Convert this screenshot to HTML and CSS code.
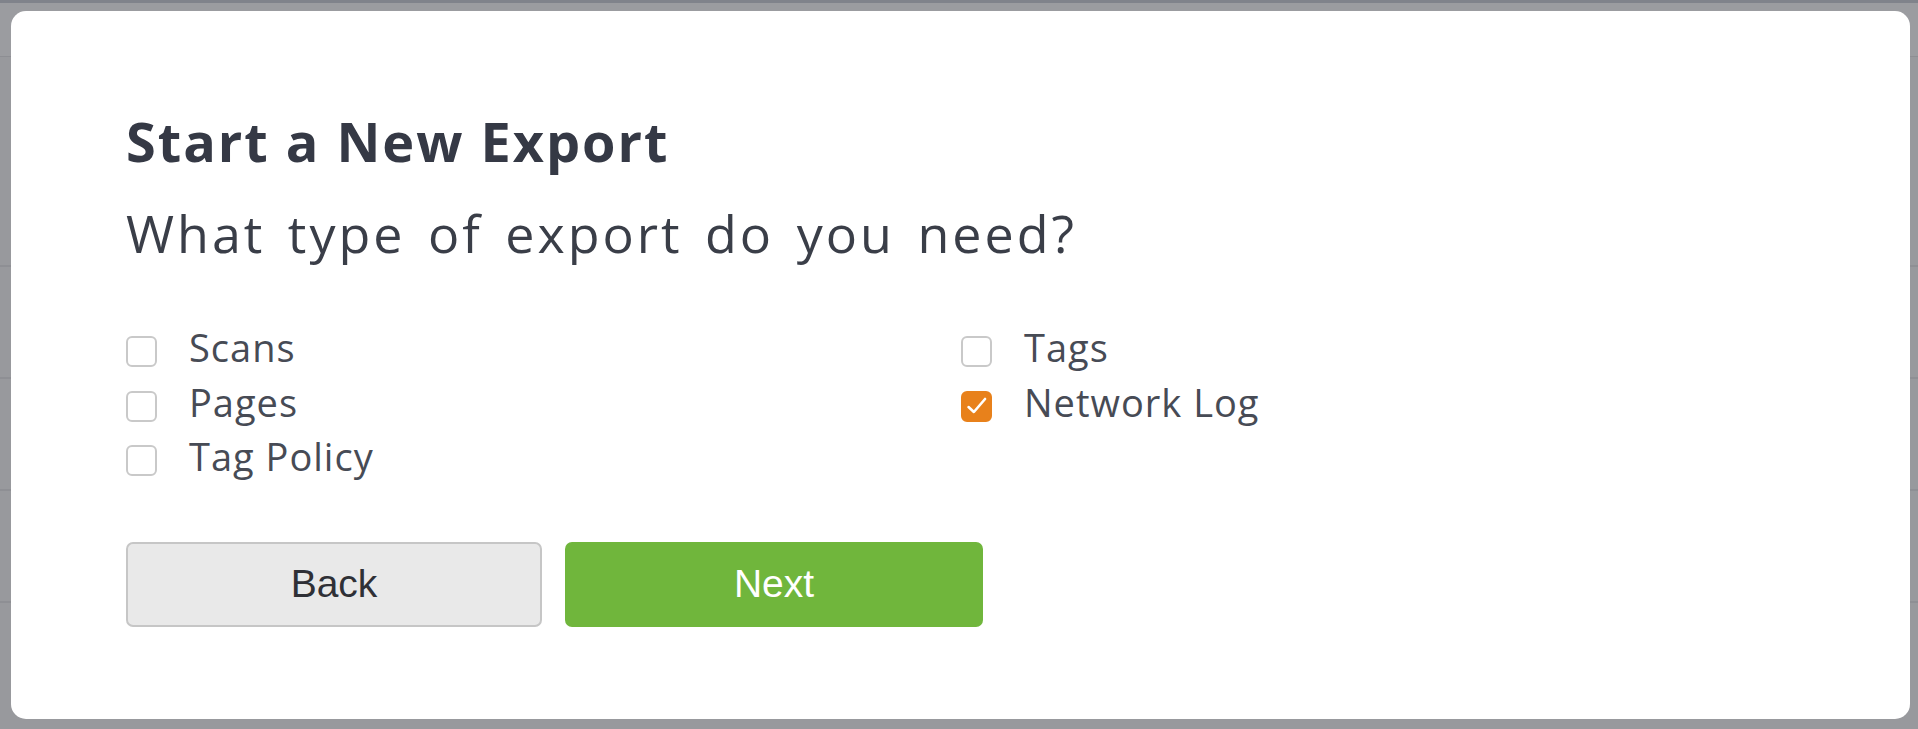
FILE: index.html
```html
<!DOCTYPE html>
<html lang="en">
<head>
  <meta charset="UTF-8">
  <title>Start a New Export</title>
  <link rel="stylesheet" href="styles.css">
</head>
<body>

  <!-- page behind the overlay -->
  <div class="backdrop">
    <div class="backdrop-top"></div>
    <div class="backdrop-row row-a"></div>
    <div class="backdrop-row"></div>
    <div class="backdrop-row"></div>
    <div class="backdrop-row"></div>
  </div>

  <!-- Export modal -->
  <div class="modal">
    <h1 class="modal-title">Start a New Export</h1>
    <h2 class="modal-question">What type of export do you need?</h2>

    <div class="options">
      <div class="option-col">
        <label class="option"><span class="box"></span>Scans</label>
        <label class="option"><span class="box"></span>Pages</label>
        <label class="option"><span class="box"></span>Tag Policy</label>
      </div>
      <div class="option-col">
        <label class="option"><span class="box"></span>Tags</label>
        <label class="option"><span class="box checked">
          <svg class="tick" viewBox="0 0 20 20"><path d="M3.5 10.8 L7.6 14.6 L16.2 4.6" fill="none" stroke="#fff" stroke-width="2" stroke-linecap="round" stroke-linejoin="round"/></svg>
        </span>Network Log</label>
      </div>
    </div>

    <div class="actions">
      <button class="btn btn-back">Back</button>
      <button class="btn btn-next">Next</button>
    </div>
  </div>

</body>
</html>
```

FILE: styles.css
```css
* {
  margin: 0;
  padding: 0;
  box-sizing: border-box;
}

body {
  width: 1918px;
  height: 729px;
  overflow: hidden;
  background: #98999d;
  font-family: 'Open Sans', sans-serif;
  position: relative;
}

/* page behind the overlay */
.backdrop {
  border-top: 3px solid #80838b;
}

.backdrop-top {
  height: 54px;
  background: #9b9ca0;
  border-bottom: 1px solid #8d8e93;
}

.backdrop-row {
  height: 112px;
  border-bottom: 2px solid #8e8f94;
}

.backdrop-row.row-a {
  height: 210px;
}

/* Modal */
.modal {
  position: absolute;
  top: 11px;
  left: 11px;
  right: 8px;
  bottom: 10px;
  background: #fff;
  border-radius: 15px;
  padding: 100px 115px 0;
}

.modal-title {
  font-size: 54px;
  line-height: 60px;
  font-weight: 700;
  color: #353945;
  letter-spacing: 2px;
}

.modal-question {
  margin-top: 32px;
  font-size: 52px;
  line-height: 60px;
  font-weight: 400;
  color: #3a3e48;
  letter-spacing: 3px;
  word-spacing: 6px;
}

.options {
  margin-top: 57px;
  display: grid;
  grid-template-columns: 835px 835px;
}

.option {
  display: flex;
  align-items: flex-start;
  height: 54.5px;
  font-size: 38px;
  line-height: 54.5px;
  color: #474b55;
  letter-spacing: 1px;
}

.box {
  width: 31px;
  height: 31px;
  margin-top: 16px;
  margin-right: 32px;
  border: 2px solid #c9c9c9;
  border-radius: 6px;
  display: flex;
  align-items: center;
  justify-content: center;
}

.box.checked {
  background: #e8811b;
  border-color: #e8811b;
}

.tick {
  width: 26px;
  height: 26px;
}

.actions {
  margin-top: 58px;
  display: flex;
  gap: 23px;
}

.btn {
  height: 85px;
  border-radius: 7px;
  font-family: 'Liberation Sans', Arial, sans-serif;
  font-size: 39px;
  cursor: pointer;
}

.btn-back {
  width: 416px;
  background: #e9e9e9;
  border: 2px solid #c6c6c6;
  color: #2f3036;
}

.btn-next {
  width: 418px;
  background: #70b63c;
  border: none;
  color: #fff;
}
```
